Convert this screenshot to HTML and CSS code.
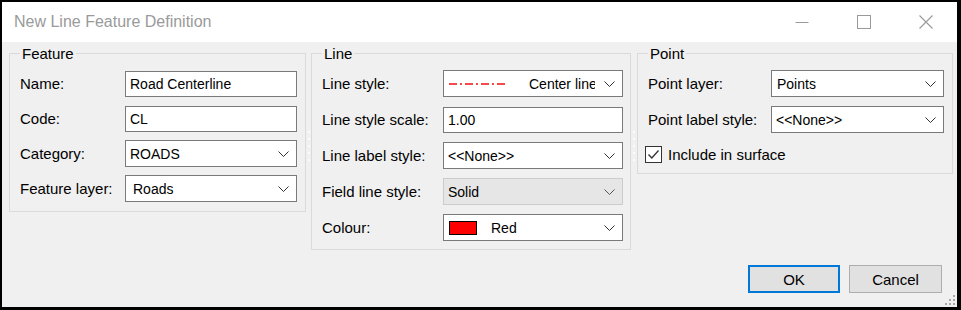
FILE: index.html
```html
<!DOCTYPE html>
<html>
<head>
<meta charset="utf-8">
<title>New Line Feature Definition</title>
<link rel="stylesheet" href="styles.css">
</head>
<body>
<div class="window">
  <div class="titlebar">
    <span class="title">New Line Feature Definition</span>
    <div class="caption-buttons">
      <span class="cap-btn"><svg width="14" height="14" viewBox="0 0 14 14"><line x1="0.5" y1="7.5" x2="13.5" y2="7.5" stroke="#999" stroke-width="1"/></svg></span>
      <span class="cap-btn"><svg width="14" height="14" viewBox="0 0 14 14"><rect x="0.5" y="0.5" width="13" height="13" fill="none" stroke="#999" stroke-width="1"/></svg></span>
      <span class="cap-btn"><svg width="14" height="14" viewBox="0 0 14 14"><path d="M0.5 0.5 L13.5 13.5 M13.5 0.5 L0.5 13.5" stroke="#999" stroke-width="1.1" fill="none"/></svg></span>
    </div>
  </div>
  <div class="client">
    <div class="panels">
      <fieldset class="group group-feature">
        <legend>Feature</legend>
        <div class="form form-feature">
          <span class="lbl">Name:</span>
          <div class="textbox">Road Centerline</div>
          <span class="lbl">Code:</span>
          <div class="textbox">CL</div>
          <span class="lbl">Category:</span>
          <div class="combo"><span class="combo-text">ROADS</span><svg class="chev" width="11" height="6" viewBox="0 0 11 6"><polyline points="0.5,0.5 5.5,5.5 10.5,0.5" fill="none" stroke="#333" stroke-width="1"/></svg></div>
          <span class="lbl">Feature layer:</span>
          <div class="combo combo-list"><span class="combo-text">Roads</span><svg class="chev" width="11" height="6" viewBox="0 0 11 6"><polyline points="0.5,0.5 5.5,5.5 10.5,0.5" fill="none" stroke="#333" stroke-width="1"/></svg></div>
        </div>
      </fieldset>
      <div class="splitter splitter-a"><span class="grip"></span></div>
      <fieldset class="group group-line">
        <legend>Line</legend>
        <div class="form form-line">
          <span class="lbl">Line style:</span>
          <div class="combo">
            <svg class="dash-preview" width="60" height="4" viewBox="0 0 60 4"><line x1="0" y1="2" x2="58" y2="2" stroke="#f01010" stroke-width="1.5" stroke-dasharray="8 3 2 3"/></svg>
            <span class="combo-text clipped">Center line</span>
            <svg class="chev" width="11" height="6" viewBox="0 0 11 6"><polyline points="0.5,0.5 5.5,5.5 10.5,0.5" fill="none" stroke="#333" stroke-width="1"/></svg>
          </div>
          <span class="lbl">Line style scale:</span>
          <div class="textbox">1.00</div>
          <span class="lbl">Line label style:</span>
          <div class="combo"><span class="combo-text">&lt;&lt;None&gt;&gt;</span><svg class="chev" width="11" height="6" viewBox="0 0 11 6"><polyline points="0.5,0.5 5.5,5.5 10.5,0.5" fill="none" stroke="#333" stroke-width="1"/></svg></div>
          <span class="lbl">Field line style:</span>
          <div class="combo combo-disabled"><span class="combo-text">Solid</span><svg class="chev" width="11" height="6" viewBox="0 0 11 6"><polyline points="0.5,0.5 5.5,5.5 10.5,0.5" fill="none" stroke="#555" stroke-width="1"/></svg></div>
          <span class="lbl">Colour:</span>
          <div class="combo"><span class="swatch"></span><span class="combo-text">Red</span><svg class="chev" width="11" height="6" viewBox="0 0 11 6"><polyline points="0.5,0.5 5.5,5.5 10.5,0.5" fill="none" stroke="#333" stroke-width="1"/></svg></div>
        </div>
      </fieldset>
      <div class="splitter splitter-b"><span class="grip"></span></div>
      <fieldset class="group group-point">
        <legend>Point</legend>
        <div class="form form-point">
          <span class="lbl">Point layer:</span>
          <div class="combo combo-points"><span class="combo-text">Points</span><svg class="chev" width="11" height="6" viewBox="0 0 11 6"><polyline points="0.5,0.5 5.5,5.5 10.5,0.5" fill="none" stroke="#333" stroke-width="1"/></svg></div>
          <span class="lbl">Point label style:</span>
          <div class="combo"><span class="combo-text">&lt;&lt;None&gt;&gt;</span><svg class="chev" width="11" height="6" viewBox="0 0 11 6"><polyline points="0.5,0.5 5.5,5.5 10.5,0.5" fill="none" stroke="#333" stroke-width="1"/></svg></div>
          <div class="check-row">
            <span class="checkbox"><svg width="15" height="15" viewBox="0 0 15 15"><polyline points="2.5,7.5 5.8,11 12.5,3.5" fill="none" stroke="#333" stroke-width="1.3"/></svg></span>
            <span class="check-label">Include in surface</span>
          </div>
        </div>
      </fieldset>
    </div>
    <div class="buttons">
      <div class="btn btn-default">OK</div>
      <div class="btn">Cancel</div>
    </div>
    <svg class="size-grip" width="10" height="10" viewBox="0 0 10 10">
      <rect x="8" y="0" width="2" height="2" fill="#a8a8a8"/>
      <rect x="4" y="4" width="2" height="2" fill="#a8a8a8"/>
      <rect x="8" y="4" width="2" height="2" fill="#a8a8a8"/>
      <rect x="0" y="8" width="2" height="2" fill="#a8a8a8"/>
      <rect x="4" y="8" width="2" height="2" fill="#a8a8a8"/>
      <rect x="8" y="8" width="2" height="2" fill="#a8a8a8"/>
    </svg>
  </div>
</div>
</body>
</html>
```
FILE: styles.css
```css
* { box-sizing: border-box; }

html, body {
  margin: 0;
  padding: 0;
  background: #ffffff;
}

body {
  font-family: "Liberation Sans", Arial, sans-serif;
  font-size: 15px;
  color: #000;
}

.window {
  width: 961px;
  height: 310px;
  border-style: solid;
  border-color: #000;
  border-width: 2px 4px 3px 2px;
  display: flex;
  flex-direction: column;
  background: #f0f0f0;
}

.titlebar {
  height: 40px;
  flex: 0 0 40px;
  background: #fff;
  display: flex;
  align-items: center;
  padding-left: 12px;
}

.title {
  font-size: 16px;
  color: #9a9a9a;
  flex: 1;
}

.caption-buttons {
  display: flex;
  height: 100%;
}

.cap-btn {
  width: 62px;
  height: 100%;
  display: flex;
  align-items: center;
  justify-content: center;
}

.client {
  flex: 1;
  position: relative;
  display: flex;
  flex-direction: column;
  background: #f0f0f0;
}

.panels {
  display: flex;
  align-items: flex-start;
  padding: 3px 4px 0 7px;
}

.group {
  margin: 0;
  border: 1px solid #dadada;
  padding: 8px 8px 9px 10px;
  min-width: 0;
}

.group legend {
  padding: 0 2px;
  font-size: 15px;
  line-height: 17px;
}

.group-feature { width: 297px; }
.group-line { width: 320px; padding-right: 7px; padding-bottom: 8px; }
.group-point { width: 316px; padding-bottom: 4px; }

.form {
  display: grid;
  grid-auto-rows: 27px;
  row-gap: 9px;
  align-items: center;
}

.form-feature { grid-template-columns: 105px 1fr; row-gap: 8px; }
.form-line { grid-template-columns: 121px 1fr; }
.form-point { grid-template-columns: 123px 1fr; }

.lbl {
  white-space: nowrap;
}

.textbox, .combo {
  height: 27px;
  background: #fff;
  border: 1px solid #7a7a7a;
  display: flex;
  align-items: center;
  padding-left: 4px;
  white-space: nowrap;
  overflow: hidden;
  font-size: 14px;
}

.textbox {
  height: 26px;
}

.combo-text {
  flex: 1;
  overflow: hidden;
}

.combo-list { padding-left: 7px; }
.combo-points { padding-left: 5px; }

.combo-disabled {
  background: #e6e6e6;
  border-color: #cccccc;
}

.chev {
  flex: 0 0 auto;
  margin-right: 7px;
  margin-left: 4px;
}

.dash-preview {
  flex: 0 0 auto;
  margin-left: 1px;
  margin-right: 20px;
}

.clipped {
  flex: 0 0 66px;
  width: 66px;
}

.combo .clipped + .chev { margin-left: auto; }

.swatch {
  flex: 0 0 auto;
  width: 28px;
  height: 14px;
  background: #ff0000;
  border: 1px solid #000;
  margin-left: 1px;
  margin-right: 14px;
}

.check-row {
  grid-column: 1 / span 2;
  display: flex;
  align-items: center;
  margin-left: -3px;
  margin-top: -2px;
}

.checkbox {
  width: 17px;
  height: 17px;
  border: 1px solid #333;
  background: #fff;
  display: flex;
  align-items: center;
  justify-content: center;
  margin-right: 6px;
}

.splitter {
  align-self: stretch;
  display: flex;
  justify-content: center;
}

.splitter-a { width: 5px; }
.splitter-b { width: 6px; }

.grip {
  width: 2px;
  height: 35px;
  margin-top: 86px;
  background: repeating-linear-gradient(to bottom, #fcfcfc 0 2px, transparent 2px 7px);
}

.buttons {
  margin-top: auto;
  display: flex;
  justify-content: flex-end;
  gap: 9px;
  padding: 0 15px 14px 0;
}

.btn {
  width: 93px;
  height: 28px;
  background: #e1e1e1;
  border: 1px solid #adadad;
  display: flex;
  align-items: center;
  justify-content: center;
}

.btn-default {
  width: 92px;
  border: 2px solid #0078d7;
}

.size-grip {
  position: absolute;
  right: 2px;
  bottom: 2px;
}
```
